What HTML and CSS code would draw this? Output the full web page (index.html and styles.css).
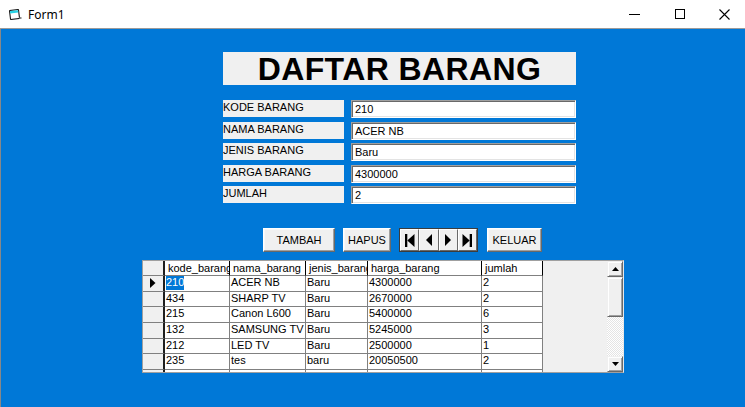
FILE: index.html
```html
<!DOCTYPE html>
<html>
<head>
<meta charset="utf-8">
<title>Form1</title>
<link rel="stylesheet" href="styles.css">
</head>
<body>
<div class="window">
  <div class="titlebar">
    <svg class="app-icon" width="14" height="11" viewBox="0 0 14 11">
      <polygon points="1.5,1.5 10.5,0.5 11.5,9.5 2.5,10.5" fill="#fff" stroke="#000" stroke-width="1"/>
      <polygon points="2,2 10,1.2 10.3,3.6 2.2,4.4" fill="#27d3e6"/>
      <rect x="11.5" y="8" width="2" height="2" fill="#888"/>
    </svg>
    <span class="caption">Form1</span>
    <div class="controls">
      <span class="ctl ctl-min"><svg width="11" height="11" viewBox="0 0 11 11"><line x1="0" y1="5.5" x2="11" y2="5.5" stroke="#000" stroke-width="1"/></svg></span>
      <span class="ctl ctl-max"><svg width="10" height="10" viewBox="0 0 10 10"><rect x="0.5" y="0.5" width="9" height="9" fill="none" stroke="#000" stroke-width="1"/></svg></span>
      <span class="ctl ctl-close"><svg width="11" height="11" viewBox="0 0 11 11"><path d="M0.5 0.5 L10.5 10.5 M10.5 0.5 L0.5 10.5" stroke="#000" stroke-width="1.1" fill="none"/></svg></span>
    </div>
  </div>
  <div class="client">
    <div class="form">
      <div class="title">DAFTAR BARANG</div>
      <div class="fields">
        <div class="label">KODE BARANG</div><div class="input">210</div>
        <div class="label">NAMA BARANG</div><div class="input">ACER NB</div>
        <div class="label">JENIS BARANG</div><div class="input">Baru</div>
        <div class="label">HARGA BARANG</div><div class="input">4300000</div>
        <div class="label">JUMLAH</div><div class="input">2</div>
      </div>
    </div>
    <div class="buttons">
      <div class="btn btn-tambah">TAMBAH</div>
      <div class="btn btn-hapus">HAPUS</div>
      <div class="nav">
        <div class="nav-btn"><svg width="10" height="13" viewBox="0 0 10 13"><rect x="0" y="0" width="2.3" height="13" fill="#000"/><polygon points="9.5,0 2.3,6.5 9.5,13" fill="#000"/></svg></div>
        <div class="nav-btn"><svg width="6" height="12" viewBox="0 0 6 12"><polygon points="6,0 0,6 6,12" fill="#000"/></svg></div>
        <div class="nav-btn"><svg width="6" height="12" viewBox="0 0 6 12"><polygon points="0,0 6,6 0,12" fill="#000"/></svg></div>
        <div class="nav-btn"><svg width="10" height="13" viewBox="0 0 10 13"><polygon points="0.5,0 7.7,6.5 0.5,13" fill="#000"/><rect x="7.7" y="0" width="2.3" height="13" fill="#000"/></svg></div>
      </div>
      <div class="btn btn-keluar">KELUAR</div>
    </div>
    <div class="datagrid">
      <div class="table">
        <div class="row head">
          <div class="rh"></div>
          <div class="c c1">kode_barang</div>
          <div class="c c2">nama_barang</div>
          <div class="c c3">jenis_barang</div>
          <div class="c c4">harga_barang</div>
          <div class="c c5">jumlah</div>
        </div>
        <div class="row">
          <div class="rh"><svg width="6" height="10" viewBox="0 0 6 10"><polygon points="0,0 5.5,5 0,10" fill="#000"/></svg></div>
          <div class="c c1"><span class="sel">210</span></div>
          <div class="c c2">ACER NB</div>
          <div class="c c3">Baru</div>
          <div class="c c4">4300000</div>
          <div class="c c5">2</div>
        </div>
        <div class="row">
          <div class="rh"></div>
          <div class="c c1">434</div>
          <div class="c c2">SHARP TV</div>
          <div class="c c3">Baru</div>
          <div class="c c4">2670000</div>
          <div class="c c5">2</div>
        </div>
        <div class="row">
          <div class="rh"></div>
          <div class="c c1">215</div>
          <div class="c c2">Canon L600</div>
          <div class="c c3">Baru</div>
          <div class="c c4">5400000</div>
          <div class="c c5">6</div>
        </div>
        <div class="row">
          <div class="rh"></div>
          <div class="c c1">132</div>
          <div class="c c2">SAMSUNG TV</div>
          <div class="c c3">Baru</div>
          <div class="c c4">5245000</div>
          <div class="c c5">3</div>
        </div>
        <div class="row">
          <div class="rh"></div>
          <div class="c c1">212</div>
          <div class="c c2">LED TV</div>
          <div class="c c3">Baru</div>
          <div class="c c4">2500000</div>
          <div class="c c5">1</div>
        </div>
        <div class="row">
          <div class="rh"></div>
          <div class="c c1">235</div>
          <div class="c c2">tes</div>
          <div class="c c3">baru</div>
          <div class="c c4">20050500</div>
          <div class="c c5">2</div>
        </div>
        <div class="row">
          <div class="rh"></div>
          <div class="c c1"></div>
          <div class="c c2"></div>
          <div class="c c3"></div>
          <div class="c c4"></div>
          <div class="c c5"></div>
        </div>
      </div>
      <div class="vscroll">
        <div class="sb-btn"><svg width="7" height="4" viewBox="0 0 7 4"><polygon points="0,4 3.5,0 7,4" fill="#000"/></svg></div>
        <div class="sb-thumb"></div>
        <div class="sb-track"></div>
        <div class="sb-btn"><svg width="7" height="4" viewBox="0 0 7 4"><polygon points="0,0 7,0 3.5,4" fill="#000"/></svg></div>
      </div>
    </div>
  </div>
</div>
</body>
</html>
```

FILE: styles.css
```css
html, body {
  margin: 0;
  padding: 0;
}
body {
  width: 745px;
  height: 407px;
  overflow: hidden;
  font-family: "Liberation Sans", Arial, sans-serif;
  font-size: 11px;
  color: #000;
  background: #0078d7;
}
.window {
  width: 745px;
  height: 407px;
}
.titlebar {
  height: 28px;
  background: #fff;
  border-bottom: 1px solid #9a9a9a;
  display: flex;
  align-items: center;
}
.app-icon {
  margin-left: 8px;
  margin-top: 1px;
  flex: none;
}
.caption {
  margin-left: 6px;
  font-family: "Noto Sans", "Open Sans", sans-serif;
  font-size: 12px;
  color: #000;
}
.controls {
  margin-left: auto;
  display: flex;
  height: 28px;
}
.ctl {
  width: 46px;
  height: 28px;
  display: flex;
  align-items: center;
  justify-content: center;
}
.ctl-close {
  width: 42px;
}
.client {
  height: 378px;
  box-sizing: border-box;
  background: #0078d7;
  border-left: 1px solid #888;
  padding-top: 23px;
}
.form {
  margin-left: 222px;
  width: 353px;
}
.title {
  height: 33px;
  background: #f0f0f0;
  font-weight: bold;
  font-size: 32px;
  letter-spacing: 0.4px;
  line-height: 35px;
  text-align: center;
  white-space: nowrap;
}
.fields {
  margin-top: 15px;
  display: grid;
  grid-template-columns: 121px 225px;
  grid-auto-rows: 18px;
  column-gap: 7px;
  row-gap: 3.5px;
}
.label {
  height: 17px;
  background: #f0f0f0;
  line-height: 14px;
  white-space: nowrap;
  overflow: hidden;
}
.input {
  height: 18px;
  box-sizing: border-box;
  background: #fff;
  border: 1px solid;
  border-color: #a0a0a0 #fff #fff #a0a0a0;
  box-shadow: inset 1px 1px #696969, inset -1px -1px #e3e3e3;
  padding: 1px 0 0 3px;
  line-height: 14px;
  white-space: nowrap;
  overflow: hidden;
}
.buttons {
  margin-top: 24px;
  margin-left: 262px;
  display: flex;
  align-items: flex-start;
}
.btn {
  height: 24px;
  box-sizing: border-box;
  background: #f0f0f0;
  border: 1px solid;
  border-color: #fff #696969 #696969 #fff;
  box-shadow: inset -1px -1px #a0a0a0, inset 1px 1px #f8f8f8;
  display: flex;
  align-items: center;
  justify-content: center;
  line-height: 14px;
}
.btn-tambah {
  width: 72px;
}
.btn-hapus {
  width: 48px;
  margin-left: 8px;
}
.btn-keluar {
  width: 55px;
  margin-left: 9px;
}
.nav {
  margin-left: 8px;
  width: 79px;
  height: 24px;
  box-sizing: border-box;
  border: 1px solid #3c3c3c;
  background: #f0f0f0;
  display: flex;
}
.nav-btn {
  flex: 1;
  box-sizing: border-box;
  border-left: 1px solid #fff;
  border-top: 1px solid #fff;
  border-right: 1px solid #696969;
  border-bottom: 1px solid #696969;
  display: flex;
  align-items: center;
  justify-content: center;
}
.datagrid {
  margin-top: 8px;
  margin-left: 141px;
  width: 482px;
  height: 113px;
  box-sizing: border-box;
  border: 1px solid #a0a0a0;
  border-right-color: #e8e8e8;
  display: flex;
  overflow: hidden;
}
.table {
  flex: 1;
  background: #f0f0f0;
  overflow: hidden;
}
.row {
  display: flex;
  height: 15.67px;
}
.row.head {
  height: 15px;
}
.rh {
  width: 22px;
  flex: none;
  box-sizing: border-box;
  background: #f0f0f0;
  border-right: 2px solid #1e1e1e;
  border-bottom: 1px solid #808080;
  display: flex;
  align-items: center;
  justify-content: center;
}
.c {
  flex: none;
  box-sizing: border-box;
  background: #fff;
  border-right: 1px solid #808080;
  border-bottom: 1px solid #808080;
  padding-left: 1px;
  line-height: 13px;
  white-space: nowrap;
  overflow: hidden;
}
.head .c {
  border-right-color: #000;
  line-height: 14px;
  padding-left: 3px;
}
.c1 { width: 65px; }
.c2 { width: 76px; }
.c3 { width: 62px; }
.c4 { width: 114px; }
.c5 { width: 61px; }
.sel {
  display: inline-block;
  height: 14px;
  background: #0078d7;
  color: #fff;
}
.vscroll {
  width: 16px;
  flex: none;
  display: flex;
  flex-direction: column;
  background: #f0f0f0;
}
.sb-btn {
  height: 16px;
  flex: none;
  box-sizing: border-box;
  background: #f0f0f0;
  border: 1px solid;
  border-color: #f0f0f0 #696969 #696969 #f0f0f0;
  box-shadow: inset 1px 1px #fff, inset -1px -1px #a0a0a0;
  display: flex;
  align-items: center;
  justify-content: center;
}
.sb-thumb {
  height: 40px;
  flex: none;
  box-sizing: border-box;
  background: #f0f0f0;
  border: 1px solid;
  border-color: #f0f0f0 #696969 #696969 #f0f0f0;
  box-shadow: inset 1px 1px #fff, inset -1px -1px #a0a0a0;
}
.sb-track {
  flex: 1;
  background: repeating-conic-gradient(#ffffff 0 25%, #e4e4e4 0 50%) 0 0 / 2px 2px;
}
```
